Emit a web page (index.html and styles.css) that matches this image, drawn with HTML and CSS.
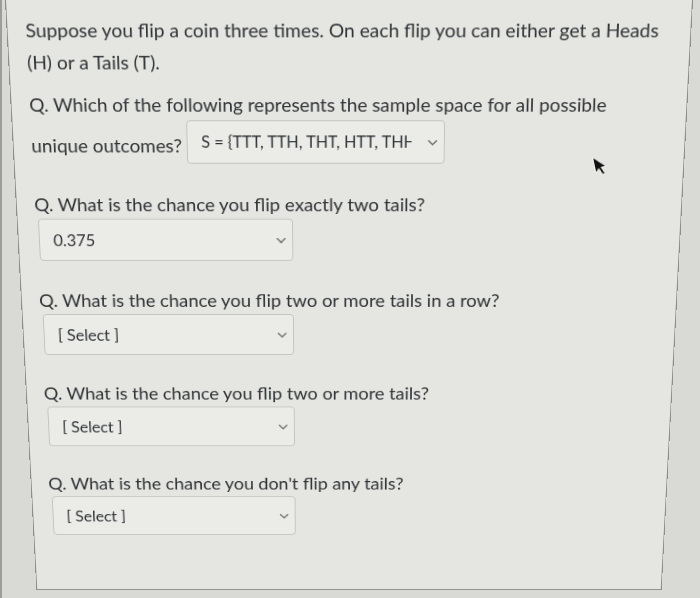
FILE: index.html
```html
<!DOCTYPE html>
<html lang="en">
<head>
    <meta charset="UTF-8">
    <meta name="viewport" content="width=device-width, initial-scale=1.0">
    <title>Quiz - Coin Flips</title>
    <link rel="stylesheet" href="styles.css">
</head>
<body>
    <div class="screen">
        <div class="panel">
            <p class="intro">Suppose you flip a coin three times. On each flip you can either get a Heads (H) or a Tails (T).</p>

            <div class="question first">
                <div class="q-text">Q. Which of the following represents the sample space for all possible</div>
                <div class="q-row">
                    <span class="q-label">unique outcomes?</span>
                    <div class="dropdown">
                        <span class="value small">S = {TTT, TTH, THT, HTT, THH, HTH, HHT, HHH}</span>
                        <svg class="chevron" viewBox="0 0 10 6"><path d="M1 1 L5 5 L9 1"/></svg>
                    </div>
                </div>
            </div>

            <div class="question">
                <div class="q-text">Q. What is the chance you flip exactly two tails?</div>
                <div class="dropdown">
                    <span class="value">0.375</span>
                    <svg class="chevron" viewBox="0 0 10 6"><path d="M1 1 L5 5 L9 1"/></svg>
                </div>
            </div>

            <div class="question">
                <div class="q-text">Q. What is the chance you flip two or more tails in a row?</div>
                <div class="dropdown">
                    <span class="value">[ Select ]</span>
                    <svg class="chevron" viewBox="0 0 10 6"><path d="M1 1 L5 5 L9 1"/></svg>
                </div>
            </div>

            <div class="question">
                <div class="q-text">Q. What is the chance you flip two or more tails?</div>
                <div class="dropdown">
                    <span class="value">[ Select ]</span>
                    <svg class="chevron" viewBox="0 0 10 6"><path d="M1 1 L5 5 L9 1"/></svg>
                </div>
            </div>

            <div class="question">
                <div class="q-text">Q. What is the chance you don't flip any tails?</div>
                <div class="dropdown">
                    <span class="value">[ Select ]</span>
                    <svg class="chevron" viewBox="0 0 10 6"><path d="M1 1 L5 5 L9 1"/></svg>
                </div>
            </div>
        </div>

        <!-- mouse pointer -->
        <svg class="cursor" viewBox="0 0 14 22">
            <path d="M1.5 1 L1.5 17 L5.2 13.4 L8 20 L10.6 18.9 L7.9 12.5 L13 12.5 Z"/>
        </svg>
    </div>
</body>
</html>
```

FILE: styles.css
```css
html, body {
    margin: 0;
    height: 598px;
    overflow: hidden;
}

body {
    font-family: Lato, "Open Sans", sans-serif;
    background-color: #d9d9d5;
    color: #303437;
}

.screen {
    position: relative;
    height: 598px;
    border-left: 2px solid #9c9c9a;
    box-sizing: border-box;
}

.panel {
    margin-left: 3px;
    width: 688px;
    height: 657px;
    box-sizing: border-box;
    padding: 14px 16px 0 18px;
    background-color: #e5e5e1;
    border: 1px solid #8e8e8c;
    border-top: none;
    transform: perspective(1000px) rotateX(-8.8deg);
    transform-origin: 50% 0;
}

.intro {
    margin: 0;
    font-size: 19.3px;
    line-height: 33px;
}

.question {
    margin-top: 31px;
}

.question.first {
    margin-top: 11px;
}

.q-text {
    font-size: 19.3px;
    line-height: 26px;
}

.question.first .q-text {
    line-height: 33px;
}

.q-row {
    display: flex;
    align-items: center;
    gap: 5px;
}

.q-label {
    font-size: 19.3px;
    padding-top: 6px;
}

.dropdown {
    display: flex;
    align-items: center;
    width: 264px;
    height: 46px;
    box-sizing: border-box;
    margin: 2px 0 0 3px;
    padding: 0 6px 0 14px;
    background-color: #ebebe8;
    border: 1px solid #c3c3bf;
    border-radius: 4px;
}

.q-row .dropdown {
    margin: 0;
}

.value {
    flex: 1;
    font-size: 17px;
    white-space: nowrap;
    overflow: hidden;
}

.value.small {
    font-size: 16.5px;
    margin-right: 16px;
}

.chevron {
    width: 11px;
    height: 7px;
    fill: none;
    stroke: #6f6f6f;
    stroke-width: 1.4;
}

.cursor {
    position: absolute;
    left: 591px;
    top: 155px;
    width: 14px;
    height: 22px;
    fill: #111;
    stroke: #f4f4f2;
    stroke-width: 1;
    transform: rotate(-12deg);
}
```
